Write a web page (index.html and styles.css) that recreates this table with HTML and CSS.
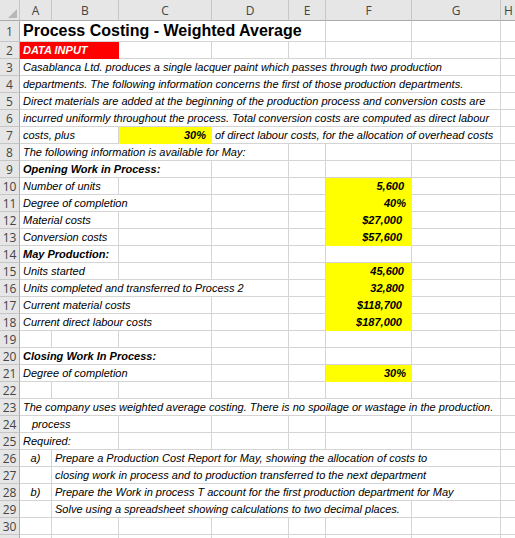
FILE: index.html
```html
<!DOCTYPE html>
<html>
<head>
<meta charset="utf-8">
<link rel="stylesheet" href="styles.css">
</head>
<body>
<div class="sheet">
  <div class="r hd">
    <div class="c corner"><svg class="tri" width="9" height="9" viewBox="0 0 9 9"><polygon points="9,0 9,9 0,9" fill="#b7b7b7"/></svg></div>
    <div class="c ch">A</div><div class="c ch">B</div><div class="c ch">C</div><div class="c ch">D</div><div class="c ch">E</div><div class="c ch">F</div><div class="c ch">G</div><div class="c ch chh">H</div>
  </div>
  <div class="r r1">
    <div class="c n">1</div>
    <div class="c s5 title">Process Costing - Weighted Average</div>
    <div class="c"></div><div class="c"></div><div class="c"></div>
  </div>
  <div class="r">
    <div class="c n">2</div>
    <div class="c s2 red">DATA INPUT</div>
    <div class="c"></div><div class="c"></div><div class="c"></div><div class="c"></div><div class="c"></div><div class="c"></div>
  </div>
  <div class="r">
    <div class="c n">3</div>
    <div class="c s7 t">Casablanca Ltd. produces a single lacquer paint which passes through two production</div>
    <div class="c"></div>
  </div>
  <div class="r">
    <div class="c n">4</div>
    <div class="c s7 t">departments. The following information concerns the first of those production departments.</div>
    <div class="c"></div>
  </div>
  <div class="r">
    <div class="c n">5</div>
    <div class="c s7 t">Direct materials are added at the beginning of the production process and conversion costs are</div>
    <div class="c"></div>
  </div>
  <div class="r">
    <div class="c n">6</div>
    <div class="c s7 t">incurred uniformly throughout the process. Total conversion costs are computed as direct labour</div>
    <div class="c"></div>
  </div>
  <div class="r">
    <div class="c n">7</div>
    <div class="c s2 t">costs, plus</div>
    <div class="c y num pct">30%</div>
    <div class="c s4 t">of direct labour costs, for the allocation of overhead costs</div>
    <div class="c"></div>
  </div>
  <div class="r">
    <div class="c n">8</div>
    <div class="c s4 t">The following information is available for May:</div>
    <div class="c"></div><div class="c"></div><div class="c"></div><div class="c"></div>
  </div>
  <div class="r">
    <div class="c n">9</div>
    <div class="c s3 t b">Opening Work in Process:</div>
    <div class="c"></div><div class="c"></div><div class="c"></div><div class="c"></div><div class="c"></div>
  </div>
  <div class="r">
    <div class="c n">10</div>
    <div class="c s2 t">Number of units</div>
    <div class="c"></div><div class="c"></div><div class="c"></div>
    <div class="c y num int">5,600</div>
    <div class="c"></div><div class="c"></div>
  </div>
  <div class="r">
    <div class="c n">11</div>
    <div class="c s3 t">Degree of completion</div>
    <div class="c"></div><div class="c"></div>
    <div class="c y num pct">40%</div>
    <div class="c"></div><div class="c"></div>
  </div>
  <div class="r">
    <div class="c n">12</div>
    <div class="c s2 t">Material costs</div>
    <div class="c"></div><div class="c"></div><div class="c"></div>
    <div class="c y num cur">$27,000</div>
    <div class="c"></div><div class="c"></div>
  </div>
  <div class="r">
    <div class="c n">13</div>
    <div class="c s2 t">Conversion costs</div>
    <div class="c"></div><div class="c"></div><div class="c"></div>
    <div class="c y num cur">$57,600</div>
    <div class="c"></div><div class="c"></div>
  </div>
  <div class="r">
    <div class="c n">14</div>
    <div class="c s2 t b">May Production:</div>
    <div class="c"></div><div class="c"></div><div class="c"></div><div class="c"></div><div class="c"></div><div class="c"></div>
  </div>
  <div class="r">
    <div class="c n">15</div>
    <div class="c s2 t">Units started</div>
    <div class="c"></div><div class="c"></div><div class="c"></div>
    <div class="c y num int">45,600</div>
    <div class="c"></div><div class="c"></div>
  </div>
  <div class="r">
    <div class="c n">16</div>
    <div class="c s4 t">Units completed and transferred to Process 2</div>
    <div class="c"></div>
    <div class="c y num int">32,800</div>
    <div class="c"></div><div class="c"></div>
  </div>
  <div class="r">
    <div class="c n">17</div>
    <div class="c s3 t">Current material costs</div>
    <div class="c"></div><div class="c"></div>
    <div class="c y num cur">$118,700</div>
    <div class="c"></div><div class="c"></div>
  </div>
  <div class="r">
    <div class="c n">18</div>
    <div class="c s3 t">Current direct labour costs</div>
    <div class="c"></div><div class="c"></div>
    <div class="c y num cur">$187,000</div>
    <div class="c"></div><div class="c"></div>
  </div>
  <div class="r">
    <div class="c n">19</div>
    <div class="c"></div><div class="c"></div><div class="c"></div><div class="c"></div><div class="c"></div><div class="c"></div><div class="c"></div><div class="c"></div>
  </div>
  <div class="r">
    <div class="c n">20</div>
    <div class="c s3 t b">Closing Work In Process:</div>
    <div class="c"></div><div class="c"></div><div class="c"></div><div class="c"></div><div class="c"></div>
  </div>
  <div class="r">
    <div class="c n">21</div>
    <div class="c s3 t">Degree of completion</div>
    <div class="c"></div><div class="c"></div>
    <div class="c y num pct">30%</div>
    <div class="c"></div><div class="c"></div>
  </div>
  <div class="r">
    <div class="c n">22</div>
    <div class="c"></div><div class="c"></div><div class="c"></div><div class="c"></div><div class="c"></div><div class="c"></div><div class="c"></div><div class="c"></div>
  </div>
  <div class="r">
    <div class="c n">23</div>
    <div class="c s7 t">The company uses weighted average costing. There is no spoilage or wastage in the production.</div>
    <div class="c"></div>
  </div>
  <div class="r">
    <div class="c n">24</div>
    <div class="c s2 t ind">process</div>
    <div class="c"></div><div class="c"></div><div class="c"></div><div class="c"></div><div class="c"></div><div class="c"></div>
  </div>
  <div class="r">
    <div class="c n">25</div>
    <div class="c s2 t">Required:</div>
    <div class="c"></div><div class="c"></div><div class="c"></div><div class="c"></div><div class="c"></div><div class="c"></div>
  </div>
  <div class="r">
    <div class="c n">26</div>
    <div class="c t ctr">a)</div>
    <div class="c s6 t">Prepare a Production Cost Report for May, showing the allocation of costs to</div>
    <div class="c"></div>
  </div>
  <div class="r">
    <div class="c n">27</div>
    <div class="c"></div>
    <div class="c s6 t">closing work in process and to production transferred to the next department</div>
    <div class="c"></div>
  </div>
  <div class="r">
    <div class="c n">28</div>
    <div class="c t ctr">b)</div>
    <div class="c s6 t">Prepare the Work in process T account for the first production department for May</div>
    <div class="c"></div>
  </div>
  <div class="r">
    <div class="c n">29</div>
    <div class="c"></div>
    <div class="c s5 t">Solve using a spreadsheet showing calculations to two decimal places.</div>
    <div class="c"></div><div class="c"></div>
  </div>
  <div class="r">
    <div class="c n">30</div>
    <div class="c"></div><div class="c"></div><div class="c"></div><div class="c"></div><div class="c"></div><div class="c"></div><div class="c"></div><div class="c"></div>
  </div>
  <div class="r">
    <div class="c n"></div>
    <div class="c"></div><div class="c"></div><div class="c"></div><div class="c"></div><div class="c"></div><div class="c"></div><div class="c"></div><div class="c"></div>
  </div>
</div>
</body>
</html>
```
FILE: styles.css
```css
html, body {
  margin: 0;
  padding: 0;
  background: #ffffff;
  overflow: hidden;
}
.sheet {
  width: 560px;
  font-family: "Liberation Sans", Arial, sans-serif;
  font-size: 11px;
  color: #000;
}
.r {
  display: grid;
  grid-template-columns: 20px 32px 67px 93px 77px 37px 86px 89px 59px;
  height: 17px;
}
.r.hd { height: 21px; }
.r.r1 { height: 21px; }
.c {
  box-sizing: border-box;
  border-right: 1px solid #d4d4d4;
  border-bottom: 1px solid #d4d4d4;
  white-space: nowrap;
  overflow: visible;
  display: flex;
  align-items: flex-end;
  min-width: 0;
  line-height: 13px;
  padding-bottom: 1px;
}
.s2 { grid-column: span 2; }
.s3 { grid-column: span 3; }
.s4 { grid-column: span 4; }
.s5 { grid-column: span 5; }
.s6 { grid-column: span 6; }
.s7 { grid-column: span 7; }

.hd .c {
  background: #e6e6e6;
  border-right: 1px solid #c6c6c6;
  border-bottom: 1px solid #ababab;
  font-family: "Open Sans", "Liberation Sans", sans-serif;
  font-size: 12px;
  color: #444;
  justify-content: center;
  align-items: center;
  padding: 0;
}
.hd .chh {
  justify-content: flex-start;
  padding-left: 3px;
}
.hd .corner {
  justify-content: flex-end;
  align-items: flex-end;
  padding: 0 2px 2px 0;
}
.tri { display: block; }
.n {
  background: #e6e6e6;
  border-right: 1px solid #ababab;
  border-bottom: 1px solid #c6c6c6;
  font-family: "Open Sans", "Liberation Sans", sans-serif;
  font-size: 12px;
  color: #444;
  justify-content: center;
  align-items: center;
  padding: 0;
}
.t {
  font-style: italic;
  padding-left: 3px;
}
.b { font-weight: bold; }
.ind { padding-left: 12px; }
.ctr { justify-content: center; padding-left: 0; }
.title {
  font-weight: bold;
  font-size: 16px;
  line-height: 18px;
  padding-left: 3px;
  padding-bottom: 1px;
}
.red {
  background: #ff0000;
  border-color: transparent;
  color: #ffffff;
  font-weight: bold;
  font-style: italic;
  padding-left: 3px;
}
.y {
  background: #ffff00;
  border-color: transparent;
}
.num {
  justify-content: flex-end;
  font-weight: bold;
  font-style: italic;
}
.int { padding-right: 7px; }
.pct { padding-right: 5px; }
.cur { padding-right: 9px; }
```
